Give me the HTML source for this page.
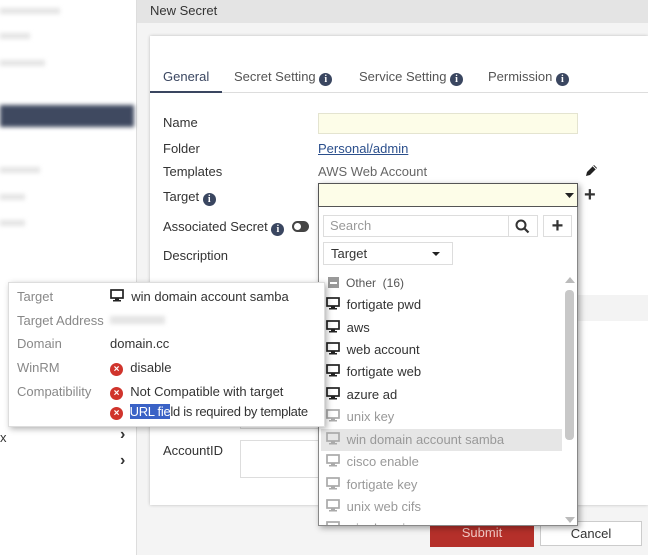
<!DOCTYPE html><html><head><style>
*{margin:0;padding:0;box-sizing:border-box}
body{width:648px;height:555px;overflow:hidden;background:#f4f4f4;font-family:"Liberation Sans",sans-serif;font-size:13px;color:#333;position:relative}
.a{position:absolute;white-space:nowrap}
.info{display:inline-block;width:13px;height:13px;border-radius:50%;background:#3a4660;color:#fff;font-size:10px;font-weight:bold;text-align:center;line-height:13px;vertical-align:-1px;font-family:"Liberation Serif",serif}
.x{display:inline-block;width:13px;height:13px;border-radius:50%;background:#d0342c;color:#fff;font-size:10px;font-weight:bold;text-align:center;line-height:13px}
.it{position:absolute;left:326px;font-size:13px}
.it svg{margin-right:3px}
.gr{color:#999}
</style></head><body>
<div class="a" style="left:0;top:0;width:137px;height:555px;background:#fff;border-right:1px solid #ddd"></div>
<div class="a" style="left:0;top:8px;width:60px;height:6px;background:#e4e4e4;filter:blur(2px)"></div>
<div class="a" style="left:0;top:33px;width:30px;height:6px;background:#e4e4e4;filter:blur(2px)"></div>
<div class="a" style="left:0;top:60px;width:45px;height:6px;background:#e4e4e4;filter:blur(2px)"></div>
<div class="a" style="left:0;top:105px;width:134px;height:22px;background:#3f4960;filter:blur(2px)"></div>
<div class="a" style="left:0;top:167px;width:40px;height:6px;background:#e4e4e4;filter:blur(2px)"></div>
<div class="a" style="left:0;top:194px;width:25px;height:6px;background:#e4e4e4;filter:blur(2px)"></div>
<div class="a" style="left:0;top:220px;width:25px;height:6px;background:#e4e4e4;filter:blur(2px)"></div>
<div class="a" style="left:0;top:430px;font-size:13px">x</div>
<div class="a" style="left:120px;top:427px;font-size:16px;font-weight:bold;line-height:16px">&#8250;</div>
<div class="a" style="left:120px;top:453px;font-size:16px;font-weight:bold;line-height:16px">&#8250;</div>
<div class="a" style="left:137px;top:0;width:511px;height:23px;background:#e4e4e4"></div>
<div class="a" style="left:150px;top:3px;font-size:13px">New Secret</div>
<div class="a" style="left:150px;top:36px;width:498px;height:469px;background:#fff;box-shadow:0 0 3px #bbb"></div>
<div class="a" style="left:150px;top:92px;width:498px;height:1px;background:#ddd"></div>
<div class="a" style="left:150px;top:91px;width:72px;height:2px;background:#3a4660"></div>
<div class="a" style="left:163px;top:69px;color:#3a4660">General</div>
<div class="a" style="left:234px;top:69px;color:#555">Secret Setting <span class="info">i</span></div>
<div class="a" style="left:359px;top:69px;color:#555">Service Setting <span class="info">i</span></div>
<div class="a" style="left:488px;top:69px;color:#555">Permission <span class="info">i</span></div>
<div class="a" style="left:163px;top:115px">Name</div>
<div class="a" style="left:318px;top:113px;width:260px;height:21px;background:#fdfde8;border:1px solid #e4e4d0"></div>
<div class="a" style="left:163px;top:141px">Folder</div>
<div class="a" style="left:318px;top:141px;color:#2b4f8c;text-decoration:underline">Personal/admin</div>
<div class="a" style="left:163px;top:164px">Templates</div>
<div class="a" style="left:318px;top:164px;color:#666">AWS Web Account</div>
<svg class="a" style="left:584px;top:163px" width="15" height="15"><path d="M2 13 L3 9 L10 2 L13 5 L6 12 Z" fill="#222"/><line x1="9" y1="3" x2="12" y2="6" stroke="#fff" stroke-width="1"/></svg>
<div class="a" style="left:163px;top:189px">Target <span class="info">i</span></div>
<div class="a" style="left:584px;top:184px;font-size:20px;font-weight:bold">+</div>
<div class="a" style="left:163px;top:219px">Associated Secret <span class="info">i</span></div>
<div class="a" style="left:292px;top:221px;width:17px;height:11px;border-radius:6px;background:#444"></div>
<div class="a" style="left:294px;top:223px;width:7px;height:7px;border-radius:4px;background:#fff"></div>
<div class="a" style="left:163px;top:248px">Description</div>
<div class="a" style="left:570px;top:295px;width:78px;height:26px;background:#f3f3f3"></div>
<div class="a" style="left:163px;top:443px">AccountID</div>
<div class="a" style="left:240px;top:440px;width:100px;height:38px;border:1px solid #ddd"></div>
<div class="a" style="left:240px;top:415px;width:100px;height:14px;border:1px solid #ddd;border-top:none"></div>
<div class="a" style="left:430px;top:519px;width:104px;height:28px;background:#b5302a;color:#f3c9c5;text-align:center;line-height:28px">Submit</div>
<div class="a" style="left:540px;top:521px;width:102px;height:25px;border:1px solid #ccc;background:#fff;text-align:center;line-height:23px">Cancel</div>
<div class="a" style="left:318px;top:183px;width:260px;height:343px;background:#fff;border:1px solid #888;box-shadow:2px 2px 6px rgba(0,0,0,.35)"></div>
<div class="a" style="left:318px;top:183px;width:260px;height:24px;background:#fdfde8;border:1px solid #555"></div>
<svg class="a" style="left:565px;top:193px" width="9" height="6"><path d="M0 0H9L4.5 5Z" fill="#222"/></svg>
<div class="a" style="left:323px;top:215px;width:186px;height:22px;border:1px solid #ddd"></div>
<div class="a" style="left:330px;top:218px;color:#999">Search</div>
<div class="a" style="left:508px;top:215px;width:30px;height:22px;border:1px solid #ddd"></div>
<svg class="a" style="left:515px;top:219px" width="15" height="15"><circle cx="6" cy="6" r="4.5" fill="none" stroke="#333" stroke-width="2"/><line x1="9.5" y1="9.5" x2="13.5" y2="13.5" stroke="#333" stroke-width="2.2"/></svg>
<div class="a" style="left:543px;top:215px;width:29px;height:22px;border:1px solid #ddd;text-align:center;font-size:20px;font-weight:bold;line-height:20px">+</div>
<div class="a" style="left:323px;top:242px;width:130px;height:23px;border:1px solid #ddd"></div>
<div class="a" style="left:331px;top:246px">Target</div>
<svg class="a" style="left:432px;top:252px" width="8" height="5"><path d="M0 0H8L4 4Z" fill="#222"/></svg>
<div class="a" style="left:328px;top:277px;width:11px;height:11px;background:#999"></div>
<div class="a" style="left:330px;top:282px;width:7px;height:2px;background:#fff"></div>
<div class="a" style="left:346px;top:276px;font-size:12px;color:#555">Other&nbsp; (16)</div>
<div class="a" style="left:321px;top:429px;width:241px;height:22px;background:#e6e6e6"></div>
<svg class="a" style="left:564px;top:276px" width="12" height="8"><path d="M1 7H11L6 1Z" fill="#bbb"/></svg>
<div class="a" style="left:565px;top:290px;width:9px;height:150px;border-radius:4px;background:#c8c8c8"></div>
<svg class="a" style="left:564px;top:516px" width="12" height="8"><path d="M1 1H11L6 7Z" fill="#bbb"/></svg>
<svg width="0" height="0" style="position:absolute"><defs><symbol id="m" viewBox="0 0 14 13"><rect x="1" y="1" width="12" height="8" fill="none" stroke="currentColor" stroke-width="1.7"/><rect x="5" y="9" width="4" height="2" fill="currentColor"/><rect x="3" y="11" width="8" height="1.5" fill="currentColor"/></symbol></defs></svg>
<div class="it" style="top:297px"><svg width="14" height="13" style="vertical-align:-1px;color:#222"><use href="#m"/></svg> fortigate pwd</div>
<div class="it" style="top:320px"><svg width="14" height="13" style="vertical-align:-1px;color:#222"><use href="#m"/></svg> aws</div>
<div class="it" style="top:342px"><svg width="14" height="13" style="vertical-align:-1px;color:#222"><use href="#m"/></svg> web account</div>
<div class="it" style="top:364px"><svg width="14" height="13" style="vertical-align:-1px;color:#222"><use href="#m"/></svg> fortigate web</div>
<div class="it" style="top:387px"><svg width="14" height="13" style="vertical-align:-1px;color:#222"><use href="#m"/></svg> azure ad</div>
<div class="it gr" style="top:409px"><svg width="14" height="13" style="vertical-align:-1px;color:#aaa"><use href="#m"/></svg> unix key</div>
<div class="it gr" style="top:432px"><svg width="14" height="13" style="vertical-align:-1px;color:#aaa"><use href="#m"/></svg> win domain account samba</div>
<div class="it gr" style="top:454px"><svg width="14" height="13" style="vertical-align:-1px;color:#aaa"><use href="#m"/></svg> cisco enable</div>
<div class="it gr" style="top:477px"><svg width="14" height="13" style="vertical-align:-1px;color:#aaa"><use href="#m"/></svg> fortigate key</div>
<div class="it gr" style="top:499px"><svg width="14" height="13" style="vertical-align:-1px;color:#aaa"><use href="#m"/></svg> unix web cifs</div>
<div class="a" style="left:319px;top:517px;width:244px;height:8px;overflow:hidden"><div class="it gr" style="left:7px;top:4px"><svg width="14" height="13" style="vertical-align:-1px;color:#aaa"><use href="#m"/></svg> win domain</div></div>
<div class="a" style="left:8px;top:282px;width:317px;height:145px;background:#fff;border:1px solid #ddd;box-shadow:2px 2px 6px rgba(0,0,0,.3)"></div>
<div class="a" style="left:17px;top:289px;color:#888">Target</div>
<div class="a" style="left:110px;top:289px"><svg width="14" height="13" style="vertical-align:-1px;color:#222"><use href="#m"/></svg>&nbsp; win domain account samba</div>
<div class="a" style="left:17px;top:313px;color:#888">Target Address</div>
<div class="a" style="left:110px;top:316px;width:55px;height:8px;background:#e4e4e4;filter:blur(2px)"></div>
<div class="a" style="left:17px;top:336px;color:#888">Domain</div>
<div class="a" style="left:110px;top:336px">domain.cc</div>
<div class="a" style="left:17px;top:360px;color:#888">WinRM</div>
<div class="a" style="left:110px;top:360px"><span class="x">×</span>&nbsp; disable</div>
<div class="a" style="left:17px;top:384px;color:#888">Compatibility</div>
<div class="a" style="left:110px;top:384px"><span class="x">×</span>&nbsp; Not Compatible with target</div>
<div class="a" style="left:110px;top:404px;letter-spacing:-0.3px"><span class="x" style="letter-spacing:0">×</span>&nbsp; <span style="background:#3a62c6;color:#fff">URL fie</span>ld is required by template</div>
</body></html>
